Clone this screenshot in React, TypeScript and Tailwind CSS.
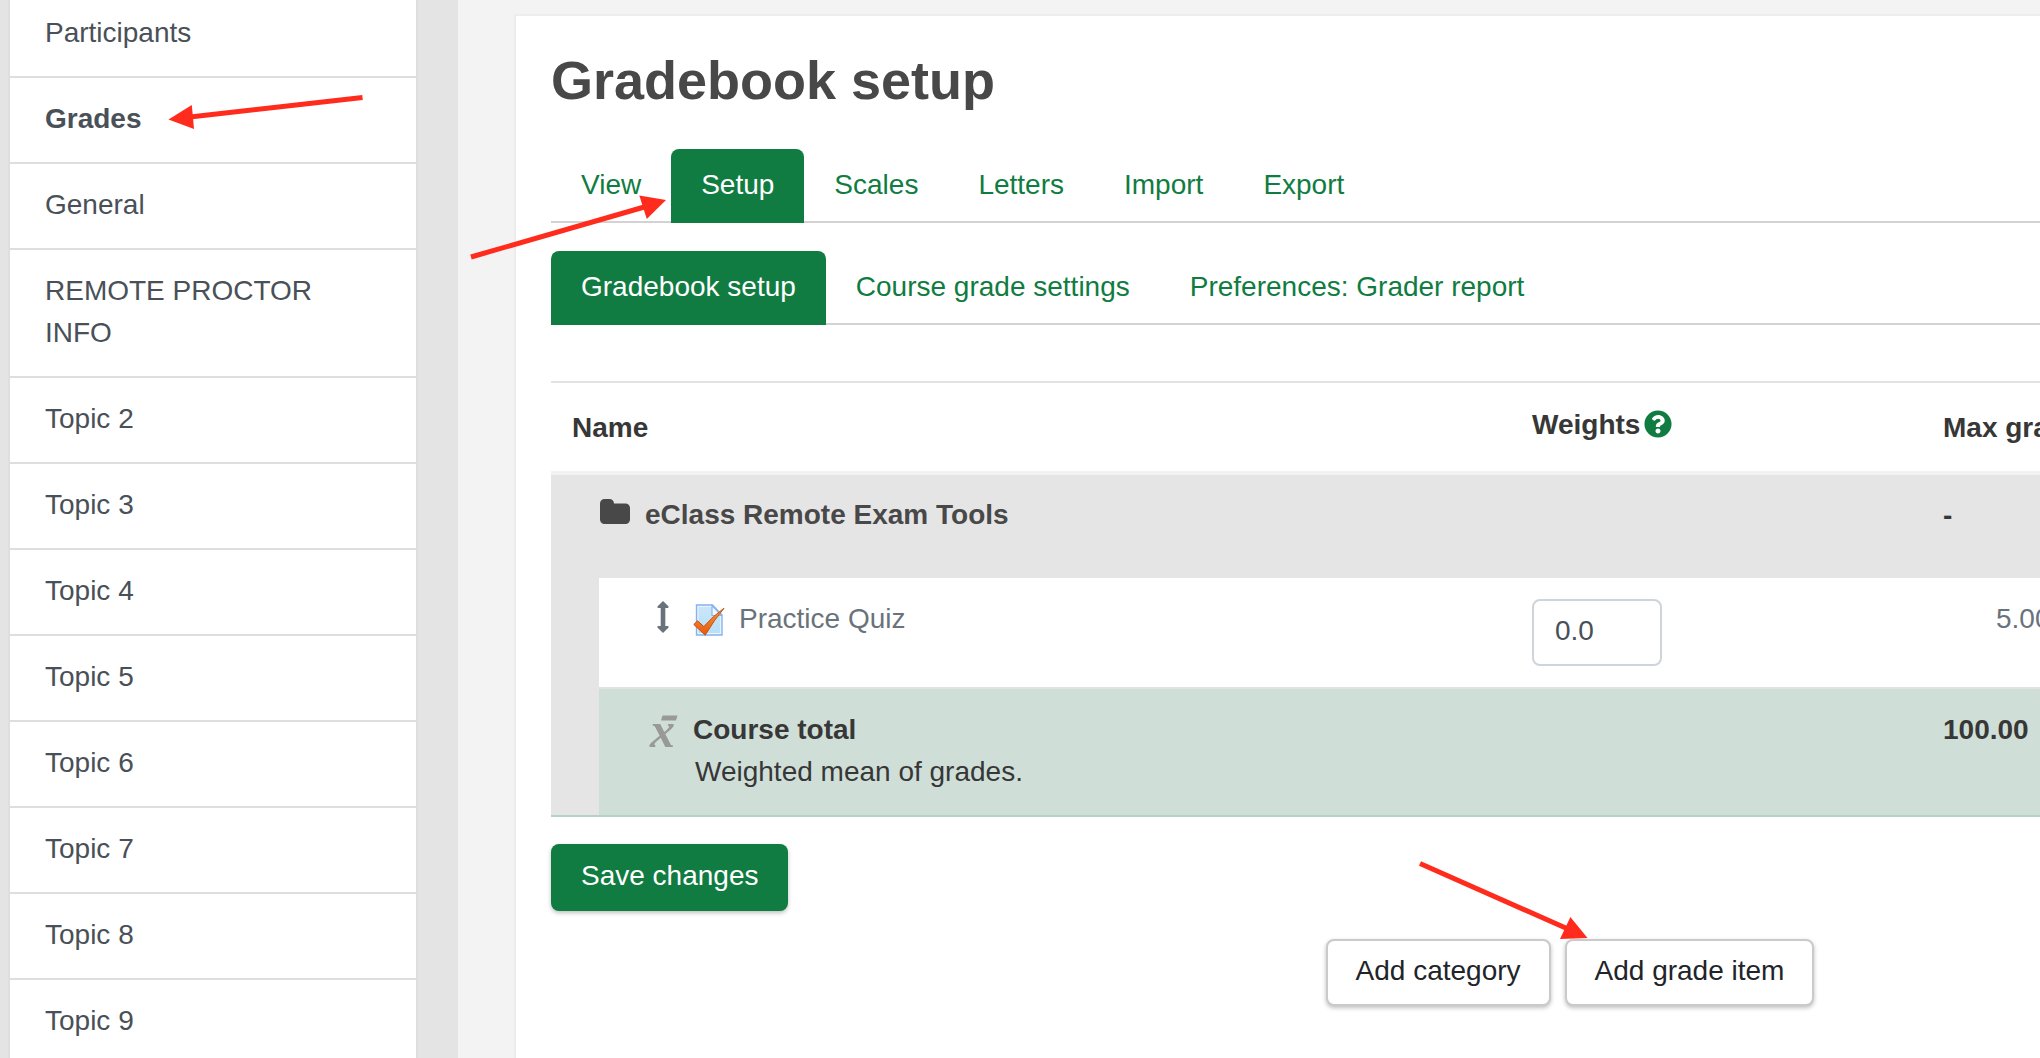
import { useState } from "react"
import { FaQuestionCircle } from "react-icons/fa"

const sections = [
  "Participants",
  "Grades",
  "General",
  "REMOTE PROCTOR INFO",
  "Topic 2",
  "Topic 3",
  "Topic 4",
  "Topic 5",
  "Topic 6",
  "Topic 7",
  "Topic 8",
  "Topic 9",
]

const mainTabs = ["View", "Setup", "Scales", "Letters", "Import", "Export"]
const subTabs = ["Gradebook setup", "Course grade settings", "Preferences: Grader report"]

function Tabs({ items, active, label }: { items: string[]; active: string; label: string }) {
  return (
    <nav aria-label={label} className="flex border-b-2 border-[#d3d3d3]">
      {items.map((item) => (
        <a
          key={item}
          href="#"
          className={
            item === active
              ? "-mb-[2px] rounded-t-lg bg-[#107c41] px-[30px] pt-[15px] pb-[17px] text-white"
              : "px-[30px] pt-[15px] pb-[15px] text-[#107c41]"
          }
        >
          {item}
        </a>
      ))}
    </nav>
  )
}

function FolderIcon() {
  return (
    <svg width="30" height="25" viewBox="0 0 30 25" fill="currentColor" aria-hidden="true">
      <path d="M0 4.500A4.500 4.500 0 0 1 4.500 0H9.500A4.500 4.500 0 0 1 14 4.500H25.500A4.500 4.500 0 0 1 30 9V20.500A4.500 4.500 0 0 1 25.500 25H4.500A4.500 4.500 0 0 1 0 20.500Z" />
    </svg>
  )
}

function MoveIcon() {
  return (
    <svg width="12" height="32" viewBox="0 0 12 32" fill="#6a737b" aria-hidden="true">
      <path d="M6 0 11.600 5.600Q12 7 10.600 7H8.300V25H10.600Q12 25 11.600 26.400L6 32 .4 26.400Q0 25 1.400 25H3.700V7H1.400Q0 7 .4 5.600Z" />
    </svg>
  )
}

function QuizIcon() {
  return (
    <svg width="32" height="32" viewBox="0 0 32 32" aria-hidden="true">
      <defs>
        <linearGradient id="page" x1="0" y1="0" x2="0" y2="1">
          <stop offset="0" stopColor="#c9e6f8" />
          <stop offset="1" stopColor="#b9e0f7" />
        </linearGradient>
        <linearGradient id="tick" x1="0" y1="0" x2="0" y2="1">
          <stop offset="0" stopColor="#f59a3c" />
          <stop offset="1" stopColor="#e8580c" />
        </linearGradient>
      </defs>
      <path d="M3.500 1H19.500L29 11V31H3.500Z" fill="#e6f4fd" stroke="#86b3ee" strokeWidth="1.4" />
      <path d="M5.500 3H18L27 12V29H5.500Z" fill="url(#page)" />
      <path d="M19 1.500V11.500H28.500Z" fill="#f2f9fe" stroke="#86b3ee" strokeWidth="1.2" />
      <path
        d="M.8 20.500 4.600 16.800 10.800 22.600Q20 12 31 4.200 21 16 12.200 31.200Z"
        fill="url(#tick)"
        stroke="#c4500f"
        strokeWidth="1"
        strokeLinejoin="round"
      />
    </svg>
  )
}

function MeanIcon() {
  return (
    <svg
      width="30"
      height="34"
      viewBox="0 0 30 34"
      fill="#999"
      role="img"
      aria-label="Mean"
      className="overflow-visible"
    >
      <path d="M13.500 .5H28.500L27 5.500H12Z" />
      <text x="1" y="32" fontSize="50" className="font-['Liberation_Serif',serif] font-bold italic">
        x
      </text>
    </svg>
  )
}

// Red pointers drawn over the page
function Pointers() {
  return (
    <svg
      className="pointer-events-none absolute top-0 left-0"
      width="2040"
      height="1058"
      fill="#ff2b1c"
      stroke="#ff2b1c"
      aria-hidden="true"
    >
      <g strokeWidth="5">
        <path d="M362.500 97.500 190 117" />
        <path d="M471 257 646 206.500" />
        <path d="M1420 863.500 1568 929" />
      </g>
      <g stroke="none">
        <path d="M168.500 119.500 191.800 105 194 129Z" />
        <path d="M666 200 639.300 195.500 646.800 219Z" />
        <path d="M1587.500 938 1570.400 917 1560 939Z" />
      </g>
    </svg>
  )
}

export default function App() {
  const [weight, setWeight] = useState("0.0")

  return (
    <div className="relative flex h-screen overflow-hidden bg-[#f3f3f3] font-['Liberation_Sans',Arial,sans-serif] text-[28px] leading-[42px] text-[#373737]">
      <aside className="w-[458px] shrink-0 bg-[#e4e4e4] pr-10 pl-2">
        <ul className="-mt-2 border-x-2 border-[#dedede] bg-white text-[#495057]">
          {sections.map((name) => (
            <li key={name} className="border-b-2 border-[#dedede]">
              <a
                href="#"
                className={
                  name === "Grades"
                    ? "block px-[35px] pt-5 pb-[22px] font-bold"
                    : "block px-[35px] pt-5 pb-[22px]"
                }
              >
                {name}
              </a>
            </li>
          ))}
        </ul>
      </aside>

      <main className="min-w-0 flex-1 pt-[14px] pl-14">
        {/* The report is wider than the window and runs off its right side */}
        <div className="-mr-[586px] min-h-screen border-2 border-[#ededed] bg-white px-[35px] pt-[31px]">
          <h1 className="mb-9 text-[54px] leading-[66px] font-bold text-[#484848]">Gradebook setup</h1>
          <div className="flex flex-col gap-7">
            <Tabs items={mainTabs} active="Setup" label="Grades" />
            <Tabs items={subTabs} active="Gradebook setup" label="Setup" />
          </div>

          <table className="mt-14 w-full table-fixed border-separate border-spacing-0 text-left">
            <colgroup>
              <col className="w-12" />
              <col className="w-[912px]" />
              <col className="w-[411px]" />
              <col />
            </colgroup>
            <thead>
              <tr className="align-top">
                <th
                  colSpan={2}
                  className="border-t-2 border-b-4 border-t-[#e2e2e2] border-b-[#f2f2f2] px-[21px] pt-6 pb-[22px]"
                >
                  Name
                </th>
                <th className="border-t-2 border-b-4 border-t-[#e2e2e2] border-b-[#f2f2f2] px-[21px] pt-[21px]">
                  <span className="flex items-start gap-1">
                    <label htmlFor="weight">Weights</label>
                    <button type="button" aria-label="Help with Weights" className="pt-[6px] text-[#107c41]">
                      <FaQuestionCircle size={28} />
                    </button>
                  </span>
                </th>
                <th className="border-t-2 border-b-4 border-t-[#e2e2e2] border-b-[#f2f2f2] px-[21px] pt-6">
                  Max grade
                </th>
              </tr>
            </thead>
            <tbody className="align-top">
              <tr className="bg-[#e5e5e5] font-bold">
                <td colSpan={3} className="pt-[19px] pb-[42px] pl-[49px] text-[#484848]">
                  <span className="flex items-start gap-[15px]">
                    <span className="pt-[5px]">
                      <FolderIcon />
                    </span>
                    eClass Remote Exam Tools
                  </span>
                </td>
                <td className="px-[21px] pt-5">-</td>
              </tr>
              <tr className="text-[#6a737b]">
                <td rowSpan={2} className="border-b-2 border-[#b4d3c5] bg-[#e5e5e5]"></td>
                <td className="border-b-2 border-[#e2e2e2] pt-5 pl-[58px]">
                  <span className="flex items-start">
                    <span className="mt-[3px] mr-6">
                      <MoveIcon />
                    </span>
                    <span className="mt-[6px] mr-[14px]">
                      <QuizIcon />
                    </span>
                    <a href="#">Practice Quiz</a>
                  </span>
                </td>
                <td className="border-b-2 border-[#e2e2e2] px-[21px] py-[21px]">
                  <input
                    id="weight"
                    type="text"
                    value={weight}
                    onChange={(e) => setWeight(e.target.value)}
                    className="block h-[67px] w-[130px] rounded-lg border-2 border-[#ced4da] bg-white px-[21px] pb-1 text-[#495057]"
                  />
                </td>
                <td className="border-b-2 border-[#e2e2e2] pt-5 pl-[74px]">5.00</td>
              </tr>
              <tr className="bg-[#cfdfd8]">
                <td className="border-b-2 border-[#b4d3c5] pt-5 pb-[22px] pl-[50px]">
                  <span className="flex items-start gap-[14px]">
                    <span className="mt-[6px]">
                      <MeanIcon />
                    </span>
                    <span>
                      <strong className="block">Course total</strong>
                      <span className="block pl-0.5">Weighted mean of grades.</span>
                    </span>
                  </span>
                </td>
                <td className="border-b-2 border-[#b4d3c5]"></td>
                <td className="border-b-2 border-[#b4d3c5] px-[21px] pt-5 font-bold">100.00</td>
              </tr>
            </tbody>
          </table>

          <button
            type="button"
            className="mt-[27px] block rounded-lg bg-[#107c41] px-[30px] pt-[11px] pb-[14px] text-white shadow-[0_2px_4px_rgba(0,0,0,0.25)]"
          >
            Save changes
          </button>
          <div className="mt-7 flex justify-center gap-[14px] text-[#212529]">
            <button
              type="button"
              className="rounded-lg border-2 border-[#cacaca] bg-white px-7 pt-[9px] pb-3 shadow-[0_2px_4px_rgba(0,0,0,0.25)]"
            >
              Add category
            </button>
            <button
              type="button"
              className="rounded-lg border-2 border-[#cacaca] bg-white px-7 pt-[9px] pb-3 shadow-[0_2px_4px_rgba(0,0,0,0.25)]"
            >
              Add grade item
            </button>
          </div>
        </div>
      </main>

      <Pointers />
    </div>
  )
}
